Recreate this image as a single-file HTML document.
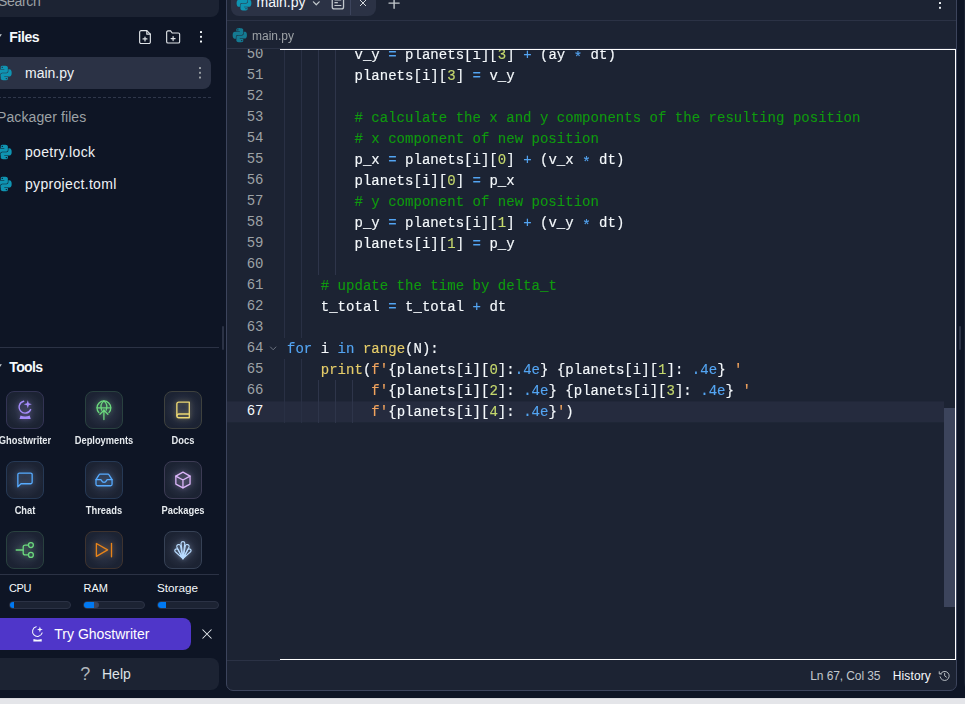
<!DOCTYPE html>
<html>
<head>
<meta charset="utf-8">
<title>main.py - Replit</title>
<style>
*{box-sizing:border-box;margin:0;padding:0}
html,body{width:965px;height:704px;overflow:hidden;background:#0e1525;}
body{position:relative;font-family:"Liberation Sans",sans-serif;color:#f5f9fc;font-size:14px;}
.abs{position:absolute}
.t{position:absolute;white-space:nowrap;line-height:1}
svg{position:absolute;overflow:visible}
/* ---------- sidebar ---------- */
#search{left:-10px;top:-16px;width:229px;height:33px;background:#1c2333;border-radius:8px}
.row{left:-10px;width:221px;height:32px;border-radius:8px}
.fname{font-size:14px;left:25px;color:#eef2f5}
.hdr{font-weight:bold;font-size:14px;left:9.3px;color:#f5f9fc;letter-spacing:-.4px}
.dim{color:#9da2a6}
.tool{width:38px;height:38px;border-radius:8px;background:#1c2333;border:1px solid #2b3245}
.tlabel{font-size:10.2px;font-weight:bold;color:#e6eaee;text-align:center;width:80px;transform:scaleX(.915);transform-origin:50% 50%}
.bar{height:8px;width:62px;top:601px;border-radius:4px;background:#1c2333;border:1px solid #2b3245;overflow:hidden}
.bar i{position:absolute;left:0;top:0;height:6px;background:#0079f2;display:block}
.rlabel{color:#f5f9fc;top:582.5px}
/* ---------- editor ---------- */
#pane{left:226px;top:-10px;width:731px;height:701px;background:#1c2333;border:1px solid #3c445c;border-radius:7px}
#code{left:227px;top:0;width:728px;height:660px;font-family:"Liberation Mono",monospace;font-size:14px;line-height:21px;white-space:pre;color:#f5f9fc;letter-spacing:0.03px}
.ln{position:absolute;left:227px;width:36.5px;text-align:right;color:#9da2a6;height:21px;font-family:"Liberation Mono",monospace;font-size:14px;line-height:21px;white-space:pre}
.ln.act{color:#f5f9fc}
.cl{position:absolute;left:286.6px;height:21px;font-family:"Liberation Mono",monospace;font-size:14px;line-height:21px;white-space:pre;color:#f5f9fc;letter-spacing:0.03px;will-change:transform;-webkit-text-stroke:0.15px}
.a{position:relative;top:2.5px}
.k{color:#54a5f3}.f{color:#e6cd69}.s{color:#f0a35e}.n{color:#c5d86d}.c{color:#109a10}
.g{position:absolute;width:1px;background:#293044}
.g2{position:absolute;width:1px;background:#2e354a}
</style>
</head>
<body>

<!-- ================= SIDEBAR ================= -->
<div id="search" class="abs"></div>
<div class="t dim" style="left:-2px;top:-5.8px;font-size:14px;letter-spacing:-.3px">Search</div>

<!-- Files header -->
<svg style="left:-6px;top:34px;transform:translate(0.9px,0.2px)" width="7" height="5.3" viewBox="0 0 7 5.3"><path fill="#c2c8cc" d="M0 0 H7 L3.5 5.3 Z"/></svg>
<div class="t hdr" style="top:30.25px">Files</div>
<!-- new file -->
<svg style="left:139px;top:30px" width="12" height="14.2" viewBox="0 0 12 14.2" fill="none" stroke="#e0e4e8" stroke-width="1.15" stroke-linejoin="round" stroke-linecap="round">
<path d="M7.8 0.65 H2.2 A1.5 1.5 0 0 0 0.65 2.2 V12 A1.5 1.5 0 0 0 2.2 13.55 H9.8 A1.5 1.5 0 0 0 11.35 12 V4.2 Z"/>
<path d="M7.8 0.65 V4.2 H11.35"/>
<path d="M6 7 V10.9 M4.05 8.95 H7.95" stroke-width="1.2"/>
</svg>
<!-- new folder -->
<svg style="left:166px;top:30px;transform:translate(0.0px,0.3px)" width="14.3" height="13.4" viewBox="0 0 14.3 13.4" fill="none" stroke="#e0e4e8" stroke-width="1.15" stroke-linejoin="round" stroke-linecap="round">
<path d="M0.65 2 A1.35 1.35 0 0 1 2 0.65 H4.6 L6.2 2.7 H12.3 A1.35 1.35 0 0 1 13.65 4.05 V11.4 A1.35 1.35 0 0 1 12.3 12.75 H2 A1.35 1.35 0 0 1 0.65 11.4 Z"/>
<path d="M7.1 6.3 V10.3 M5.1 8.3 H9.1" stroke-width="1.2"/>
</svg>
<!-- kebab -->
<div class="abs" style="left:200px;top:31.3px;width:2.2px;height:2.2px;background:#f5f9fc;border-radius:.5px;box-shadow:0 4.7px 0 #f5f9fc,0 9.4px 0 #f5f9fc"></div>

<!-- main.py row -->
<div class="abs row" style="top:57px;background:#2b3245"></div>
<svg style="left:-4px;top:65px;transform:translate(0.95px,0.65px)" width="14.7" height="14.7" viewBox="0 0 24 24"><path fill="#0f94b2" d="M14.25.18l.9.2.73.26.59.3.45.32.34.34.25.34.16.33.1.3.04.26.02.2-.01.13V8.5l-.05.63-.13.55-.21.46-.26.38-.3.31-.33.25-.35.19-.35.14-.33.1-.3.07-.26.04-.21.02H8.77l-.69.05-.59.14-.5.22-.41.27-.33.32-.27.35-.2.36-.15.37-.1.35-.07.32-.04.27-.02.21v3.06H3.17l-.21-.03-.28-.07-.32-.12-.35-.18-.36-.26-.36-.36-.35-.46-.32-.59-.28-.73-.21-.88-.14-1.05-.05-1.23.06-1.22.16-1.04.24-.87.32-.71.36-.57.4-.44.42-.33.42-.24.4-.16.36-.1.32-.05.24-.01h.16l.06.01h8.16v-.83H6.18l-.01-2.75-.02-.37.05-.34.11-.31.17-.28.25-.26.31-.23.38-.2.44-.18.51-.15.58-.12.64-.1.71-.06.77-.04.84-.02 1.27.05zm-6.3 1.98l-.23.33-.08.41.08.41.23.34.33.22.41.09.41-.09.33-.22.23-.34.08-.41-.08-.41-.23-.33-.33-.22-.41-.09-.41.09zm13.09 3.95l.28.06.32.12.35.18.36.27.36.35.35.47.32.59.28.73.21.88.14 1.04.05 1.23-.06 1.23-.16 1.04-.24.86-.32.71-.36.57-.4.45-.42.33-.42.24-.4.16-.36.09-.32.05-.24.02-.16-.01h-8.22v.82h5.84l.01 2.76.02.36-.05.34-.11.31-.17.29-.25.25-.31.24-.38.2-.44.17-.51.15-.58.13-.64.09-.71.07-.77.04-.84.01-1.27-.04-1.07-.14-.9-.2-.73-.25-.59-.3-.45-.33-.34-.34-.25-.34-.16-.33-.1-.3-.04-.25-.02-.2.01-.13v-5.34l.05-.64.13-.54.21-.46.26-.38.3-.32.33-.24.35-.2.35-.14.33-.1.3-.06.26-.04.21-.02.13-.01h5.84l.69-.05.59-.14.5-.21.41-.28.33-.32.27-.35.2-.36.15-.36.1-.35.07-.32.04-.28.02-.21V6.07h2.09l.14.01zm-6.47 14.25l-.23.33-.08.41.08.41.23.33.33.23.41.08.41-.08.33-.23.23-.33.08-.41-.08-.41-.23-.33-.33-.23-.41-.08-.41.08z"/></svg>
<div class="t fname" style="top:65.6px">main.py</div>
<div class="abs" style="left:199px;top:67.2px;width:2.2px;height:2.2px;background:#9da2a6;border-radius:.5px;box-shadow:0 4.7px 0 #9da2a6,0 9.4px 0 #9da2a6"></div>

<!-- dashed separator -->
<div class="abs" style="left:0;top:97px;width:211px;height:1px;background:repeating-linear-gradient(90deg,#2f374b 0 1px,transparent 1px 3px,#2f374b 3px 5px)"></div>

<div class="t dim" style="left:-3px;top:110px;font-size:14px;letter-spacing:.1px">Packager files</div>
<svg style="left:-4px;top:144px;transform:translate(0.95px,0.65px)" width="14.7" height="14.7" viewBox="0 0 24 24"><path fill="#0f94b2" d="M14.25.18l.9.2.73.26.59.3.45.32.34.34.25.34.16.33.1.3.04.26.02.2-.01.13V8.5l-.05.63-.13.55-.21.46-.26.38-.3.31-.33.25-.35.19-.35.14-.33.1-.3.07-.26.04-.21.02H8.77l-.69.05-.59.14-.5.22-.41.27-.33.32-.27.35-.2.36-.15.37-.1.35-.07.32-.04.27-.02.21v3.06H3.17l-.21-.03-.28-.07-.32-.12-.35-.18-.36-.26-.36-.36-.35-.46-.32-.59-.28-.73-.21-.88-.14-1.05-.05-1.23.06-1.22.16-1.04.24-.87.32-.71.36-.57.4-.44.42-.33.42-.24.4-.16.36-.1.32-.05.24-.01h.16l.06.01h8.16v-.83H6.18l-.01-2.75-.02-.37.05-.34.11-.31.17-.28.25-.26.31-.23.38-.2.44-.18.51-.15.58-.12.64-.1.71-.06.77-.04.84-.02 1.27.05zm-6.3 1.98l-.23.33-.08.41.08.41.23.34.33.22.41.09.41-.09.33-.22.23-.34.08-.41-.08-.41-.23-.33-.33-.22-.41-.09-.41.09zm13.09 3.95l.28.06.32.12.35.18.36.27.36.35.35.47.32.59.28.73.21.88.14 1.04.05 1.23-.06 1.23-.16 1.04-.24.86-.32.71-.36.57-.4.45-.42.33-.42.24-.4.16-.36.09-.32.05-.24.02-.16-.01h-8.22v.82h5.84l.01 2.76.02.36-.05.34-.11.31-.17.29-.25.25-.31.24-.38.2-.44.17-.51.15-.58.13-.64.09-.71.07-.77.04-.84.01-1.27-.04-1.07-.14-.9-.2-.73-.25-.59-.3-.45-.33-.34-.34-.25-.34-.16-.33-.1-.3-.04-.25-.02-.2.01-.13v-5.34l.05-.64.13-.54.21-.46.26-.38.3-.32.33-.24.35-.2.35-.14.33-.1.3-.06.26-.04.21-.02.13-.01h5.84l.69-.05.59-.14.5-.21.41-.28.33-.32.27-.35.2-.36.15-.36.1-.35.07-.32.04-.28.02-.21V6.07h2.09l.14.01zm-6.47 14.25l-.23.33-.08.41.08.41.23.33.33.23.41.08.41-.08.33-.23.23-.33.08-.41-.08-.41-.23-.33-.33-.23-.41-.08-.41.08z"/></svg>
<div class="t fname" style="top:144.6px;letter-spacing:.33px">poetry.lock</div>
<svg style="left:-4px;top:176px;transform:translate(0.95px,0.65px)" width="14.7" height="14.7" viewBox="0 0 24 24"><path fill="#0f94b2" d="M14.25.18l.9.2.73.26.59.3.45.32.34.34.25.34.16.33.1.3.04.26.02.2-.01.13V8.5l-.05.63-.13.55-.21.46-.26.38-.3.31-.33.25-.35.19-.35.14-.33.1-.3.07-.26.04-.21.02H8.77l-.69.05-.59.14-.5.22-.41.27-.33.32-.27.35-.2.36-.15.37-.1.35-.07.32-.04.27-.02.21v3.06H3.17l-.21-.03-.28-.07-.32-.12-.35-.18-.36-.26-.36-.36-.35-.46-.32-.59-.28-.73-.21-.88-.14-1.05-.05-1.23.06-1.22.16-1.04.24-.87.32-.71.36-.57.4-.44.42-.33.42-.24.4-.16.36-.1.32-.05.24-.01h.16l.06.01h8.16v-.83H6.18l-.01-2.75-.02-.37.05-.34.11-.31.17-.28.25-.26.31-.23.38-.2.44-.18.51-.15.58-.12.64-.1.71-.06.77-.04.84-.02 1.27.05zm-6.3 1.98l-.23.33-.08.41.08.41.23.34.33.22.41.09.41-.09.33-.22.23-.34.08-.41-.08-.41-.23-.33-.33-.22-.41-.09-.41.09zm13.09 3.95l.28.06.32.12.35.18.36.27.36.35.35.47.32.59.28.73.21.88.14 1.04.05 1.23-.06 1.23-.16 1.04-.24.86-.32.71-.36.57-.4.45-.42.33-.42.24-.4.16-.36.09-.32.05-.24.02-.16-.01h-8.22v.82h5.84l.01 2.76.02.36-.05.34-.11.31-.17.29-.25.25-.31.24-.38.2-.44.17-.51.15-.58.13-.64.09-.71.07-.77.04-.84.01-1.27-.04-1.07-.14-.9-.2-.73-.25-.59-.3-.45-.33-.34-.34-.25-.34-.16-.33-.1-.3-.04-.25-.02-.2.01-.13v-5.34l.05-.64.13-.54.21-.46.26-.38.3-.32.33-.24.35-.2.35-.14.33-.1.3-.06.26-.04.21-.02.13-.01h5.84l.69-.05.59-.14.5-.21.41-.28.33-.32.27-.35.2-.36.15-.36.1-.35.07-.32.04-.28.02-.21V6.07h2.09l.14.01zm-6.47 14.25l-.23.33-.08.41.08.41.23.33.33.23.41.08.41-.08.33-.23.23-.33.08-.41-.08-.41-.23-.33-.33-.23-.41-.08-.41.08z"/></svg>
<div class="t fname" style="top:176.6px;letter-spacing:.32px">pyproject.toml</div>

<!-- resize handle -->
<div class="abs" style="left:222px;top:326px;width:2px;height:24px;background:#2b3245;border-radius:1px"></div>

<!-- Tools -->
<div class="abs" style="left:0;top:347px;width:219px;height:1px;background:#2b3245"></div>
<svg style="left:-6px;top:364px;transform:translate(0.9px,0.2px)" width="7" height="5.3" viewBox="0 0 7 5.3"><path fill="#c2c8cc" d="M0 0 H7 L3.5 5.3 Z"/></svg>
<div class="t hdr" style="top:359.7px;letter-spacing:-.62px">Tools</div>
<div class="abs tool" style="left:6px;top:391px;border-color:#333454;background:radial-gradient(circle at 50% 50%, #343a4c 0%, #272e40 38%, #1c2333 72%)"></div><svg style="left:6px;top:391px;filter:drop-shadow(0 0 2.5px #a58cfa70)" width="38" height="38" viewBox="0 0 38 38" fill="none" stroke-linecap="round" stroke-linejoin="round"><g stroke="#a58cfa" stroke-width="1.4"><path d="M17.6 10.3 A6 6 0 1 0 24.6 18.6"/></g><path fill="#a58cfa" d="M21.8 9.2 L22.75 12.25 L25.8 13.2 L22.75 14.15 L21.8 17.2 L20.85 14.15 L17.8 13.2 L20.85 12.25 Z"/><path fill="#a58cfa" d="M14.5 24.5 Q19.1 26.6 23.7 24.5 L24.7 27.9 L13.5 27.9 Z"/></svg>
<div class="t tlabel" style="left:-15px;top:436.3px">Ghostwriter</div>
<div class="abs tool" style="left:85px;top:391px;border-color:#29413f;background:radial-gradient(circle at 50% 50%, #343a4c 0%, #272e40 38%, #1c2333 72%)"></div><svg style="left:85px;top:391px;filter:drop-shadow(0 0 2.5px #6cd97e70)" width="38" height="38" viewBox="0 0 38 38" fill="none" stroke-linecap="round" stroke-linejoin="round"><g stroke="#6cd97e" stroke-width="1.3"><path d="M13.9 21.6 A6.9 6.9 0 1 1 23.9 21.6"/><path d="M12.1 16.8 H25.7"/><path d="M16.6 19.2 C15.3 15.4 16.3 11.9 18.9 10 C21.5 11.9 22.5 15.4 21.2 19.2"/><path d="M18.9 28.5 V19"/><path d="M14.9 23.2 L18.9 19.2 L22.9 23.2"/></g></svg>
<div class="t tlabel" style="left:64px;top:436.3px">Deployments</div>
<div class="abs tool" style="left:164px;top:391px;border-color:#3e413e;background:radial-gradient(circle at 50% 50%, #343a4c 0%, #272e40 38%, #1c2333 72%)"></div><svg style="left:164px;top:391px;filter:drop-shadow(0 0 2.5px #ecd87470)" width="38" height="38" viewBox="0 0 38 38" fill="none" stroke-linecap="round" stroke-linejoin="round"><g stroke="#ecd874" stroke-width="1.35"><path d="M25.3 11.05 H14.85 A2 2 0 0 0 12.85 13.05 V24.75 A2 2 0 0 0 14.85 26.75 H25.3 Z"/><path d="M12.95 24.6 A2 2 0 0 1 14.85 23 H25.3"/></g></svg>
<div class="t tlabel" style="left:143px;top:436.3px">Docs</div>
<div class="abs tool" style="left:6px;top:461px;border-color:#263955;background:radial-gradient(circle at 50% 50%, #343a4c 0%, #272e40 38%, #1c2333 72%)"></div><svg style="left:6px;top:461px;filter:drop-shadow(0 0 2.5px #57abff70)" width="38" height="38" viewBox="0 0 38 38" fill="none" stroke-linecap="round" stroke-linejoin="round"><g stroke="#57abff" stroke-width="1.3"><path d="M11.85 25.7 V13.6 A1.5 1.5 0 0 1 13.35 12.1 H24.65 A1.5 1.5 0 0 1 26.15 13.6 V21.25 A1.5 1.5 0 0 1 24.65 22.75 H15 Z"/></g></svg>
<div class="t tlabel" style="left:-15px;top:506.3px">Chat</div>
<div class="abs tool" style="left:85px;top:461px;border-color:#263955;background:radial-gradient(circle at 50% 50%, #343a4c 0%, #272e40 38%, #1c2333 72%)"></div><svg style="left:85px;top:461px;filter:drop-shadow(0 0 2.5px #57abff70)" width="38" height="38" viewBox="0 0 38 38" fill="none" stroke-linecap="round" stroke-linejoin="round"><g stroke="#57abff" stroke-width="1.3"><path d="M11 18.6 L14 13.8 A1.3 1.3 0 0 1 15.1 13.15 H22.95 A1.3 1.3 0 0 1 24.05 13.8 L27.05 18.6 V23.25 A1.5 1.5 0 0 1 25.55 24.75 H12.5 A1.5 1.5 0 0 1 11 23.25 Z"/><path d="M11 18.6 H15.8 C16.5 18.6 16.5 21.3 19.03 21.3 C21.55 21.3 21.55 18.6 22.25 18.6 H27.05"/></g></svg>
<div class="t tlabel" style="left:64px;top:506.3px">Threads</div>
<div class="abs tool" style="left:164px;top:461px;border-color:#3c3b54;background:radial-gradient(circle at 50% 50%, #343a4c 0%, #272e40 38%, #1c2333 72%)"></div><svg style="left:164px;top:461px;filter:drop-shadow(0 0 2.5px #dcb6fa70)" width="38" height="38" viewBox="0 0 38 38" fill="none" stroke-linecap="round" stroke-linejoin="round"><g stroke="#dcb6fa" stroke-width="1.3"><path d="M18.95 11.1 L26.05 15.1 V23.1 L18.95 26.8 L11.85 23.1 V15.1 Z"/><path d="M11.85 15.1 L18.95 19 L26.05 15.1 M18.95 19 V26.8"/></g></svg>
<div class="t tlabel" style="left:143px;top:506.3px">Packages</div>
<div class="abs tool" style="left:6px;top:531px;border-color:#29413f;background:radial-gradient(circle at 50% 50%, #343a4c 0%, #272e40 38%, #1c2333 72%)"></div><svg style="left:6px;top:531px;filter:drop-shadow(0 0 2.5px #6cd97e70)" width="38" height="38" viewBox="0 0 38 38" fill="none" stroke-linecap="round" stroke-linejoin="round"><g stroke="#6cd97e" stroke-width="1.3"><path d="M10.2 19 H17.2"/><path d="M22.4 14.1 H19.2 A2 2 0 0 0 17.2 16.1 V21.9 A2 2 0 0 0 19.2 23.9 H22.4"/><circle cx="24.9" cy="14.1" r="2.45"/><circle cx="24.9" cy="23.9" r="2.45"/></g></svg>
<div class="abs tool" style="left:85px;top:531px;border-color:#3e332f;background:radial-gradient(circle at 50% 50%, #343a4c 0%, #272e40 38%, #1c2333 72%)"></div><svg style="left:85px;top:531px;filter:drop-shadow(0 0 2.5px #e8841a70)" width="38" height="38" viewBox="0 0 38 38" fill="none" stroke-linecap="round" stroke-linejoin="round"><g stroke="#e8841a" stroke-width="1.35"><path d="M11.4 12.5 V25.3 L22.6 18.9 Z"/><path d="M26.5 12.4 V25.7"/></g></svg>
<div class="abs tool" style="left:164px;top:531px;border-color:#364155;background:radial-gradient(circle at 50% 50%, #343a4c 0%, #272e40 38%, #1c2333 72%)"></div><svg style="left:164px;top:531px;filter:drop-shadow(0 0 2.5px #b8dbff70)" width="38" height="38" viewBox="0 0 38 38" fill="none" stroke-linecap="round" stroke-linejoin="round"><g stroke="#b8dbff" stroke-width="1.15" fill="none" stroke-linejoin="round"><path d="M18.93 27.7 L11.07 20.49 A1.78 1.78 0 0 1 13.84 18.33 Z"/><path d="M18.93 27.7 L24.02 18.33 A1.78 1.78 0 0 1 26.79 20.49 Z"/><path d="M18.93 27.7 L12.80 15.93 A1.98 1.98 0 0 1 16.51 14.65 Z"/><path d="M18.93 27.7 L21.35 14.65 A1.98 1.98 0 0 1 25.06 15.93 Z"/><path d="M18.93 27.7 L17.04 12.33 A1.90 1.90 0 0 1 20.82 12.33 Z"/></g><path fill="#b8dbff" d="M18.93 28.1 L15.4 24.4 Q18.93 22.8 22.46 24.4 Z"/></svg>

<!-- resources -->
<div class="abs" style="left:0;top:574px;width:219px;height:1px;background:#2b3245"></div>
<div class="t rlabel" style="left:9px;font-size:11px;letter-spacing:-.35px">CPU</div>
<div class="t rlabel" style="left:83.5px;font-size:11px">RAM</div>
<div class="t rlabel" style="left:157px;top:581.5px;font-size:11.7px">Storage</div>
<div class="abs bar" style="left:9px"><i style="width:4px"></i></div>
<div class="abs bar" style="left:82.5px"><i style="width:15px;background:#3c445c;border-radius:0 3px 3px 0"></i><i style="width:10px"></i></div>
<div class="abs bar" style="left:157px"><i style="width:8px"></i></div>

<!-- Try Ghostwriter -->
<div class="abs" style="left:-10px;top:618px;width:201px;height:32px;border-radius:8px;background:#4f36c9"></div>
<svg style="left:31px;top:626px" width="12" height="16" viewBox="0 0 12 16" fill="none" stroke-linecap="round">
<path d="M5.2 0.75 A4.9 4.9 0 1 0 11.15 6.9" stroke="#f5f9fc" stroke-width="1.05"/>
<path fill="#f5f9fc" d="M8.9 0.6 L9.6 2.8 L11.8 3.5 L9.6 4.2 L8.9 6.4 L8.2 4.2 L6 3.5 L8.2 2.8 Z"/>
<path fill="#f5f9fc" d="M2.5 13.1 Q6.55 14.5 10.6 13.1 L10.8 15.6 H2.3 Z"/>
</svg>
<div class="t" style="left:54.3px;top:627.1px;font-size:14px;color:#fff">Try Ghostwriter</div>
<svg style="left:202px;top:629px" width="10" height="10" viewBox="0 0 10 10" stroke="#e8ecef" stroke-width="1.05" stroke-linecap="butt"><path d="M0.5 0.5 L9.5 9.5 M9.5 0.5 L0.5 9.5"/></svg>

<!-- Help -->
<div class="abs" style="left:-10px;top:658px;width:229px;height:32px;border-radius:8px;background:#1c2333"></div>
<div class="t" style="left:80.3px;top:665.3px;font-size:18px;color:#b0b6bb">?</div>
<div class="t" style="left:102px;top:667.2px;font-size:14px;color:#dfe3e7">Help</div>

<!-- ================= EDITOR ================= -->
<div id="pane" class="abs"></div>

<!-- tab -->
<div class="abs" style="left:231px;top:-12px;width:145px;height:28px;border-radius:8px;background:#2b3245"></div>
<svg style="left:236px;top:-5px;transform:translate(0.65px,0.85px)" width="14.7" height="14.7" viewBox="0 0 24 24"><path fill="#0f94b2" d="M14.25.18l.9.2.73.26.59.3.45.32.34.34.25.34.16.33.1.3.04.26.02.2-.01.13V8.5l-.05.63-.13.55-.21.46-.26.38-.3.31-.33.25-.35.19-.35.14-.33.1-.3.07-.26.04-.21.02H8.77l-.69.05-.59.14-.5.22-.41.27-.33.32-.27.35-.2.36-.15.37-.1.35-.07.32-.04.27-.02.21v3.06H3.17l-.21-.03-.28-.07-.32-.12-.35-.18-.36-.26-.36-.36-.35-.46-.32-.59-.28-.73-.21-.88-.14-1.05-.05-1.23.06-1.22.16-1.04.24-.87.32-.71.36-.57.4-.44.42-.33.42-.24.4-.16.36-.1.32-.05.24-.01h.16l.06.01h8.16v-.83H6.18l-.01-2.75-.02-.37.05-.34.11-.31.17-.28.25-.26.31-.23.38-.2.44-.18.51-.15.58-.12.64-.1.71-.06.77-.04.84-.02 1.27.05zm-6.3 1.98l-.23.33-.08.41.08.41.23.34.33.22.41.09.41-.09.33-.22.23-.34.08-.41-.08-.41-.23-.33-.33-.22-.41-.09-.41.09zm13.09 3.95l.28.06.32.12.35.18.36.27.36.35.35.47.32.59.28.73.21.88.14 1.04.05 1.23-.06 1.23-.16 1.04-.24.86-.32.71-.36.57-.4.45-.42.33-.42.24-.4.16-.36.09-.32.05-.24.02-.16-.01h-8.22v.82h5.84l.01 2.76.02.36-.05.34-.11.31-.17.29-.25.25-.31.24-.38.2-.44.17-.51.15-.58.13-.64.09-.71.07-.77.04-.84.01-1.27-.04-1.07-.14-.9-.2-.73-.25-.59-.3-.45-.33-.34-.34-.25-.34-.16-.33-.1-.3-.04-.25-.02-.2.01-.13v-5.34l.05-.64.13-.54.21-.46.26-.38.3-.32.33-.24.35-.2.35-.14.33-.1.3-.06.26-.04.21-.02.13-.01h5.84l.69-.05.59-.14.5-.21.41-.28.33-.32.27-.35.2-.36.15-.36.1-.35.07-.32.04-.28.02-.21V6.07h2.09l.14.01zm-6.47 14.25l-.23.33-.08.41.08.41.23.33.33.23.41.08.41-.08.33-.23.23-.33.08-.41-.08-.41-.23-.33-.33-.23-.41-.08-.41.08z"/></svg>
<div class="t" style="left:256.5px;top:-5.3px;font-size:14px;color:#f5f9fc">main.py</div>
<svg style="left:312px;top:1px;transform:translate(0.8px,0.2px)" width="7" height="4.2" viewBox="0 0 7 4.2" fill="none" stroke="#c2c8cc" stroke-width="1.2" stroke-linecap="round" stroke-linejoin="round"><path d="M0.6 0.6 L3.5 3.6 L6.4 0.6"/></svg>
<svg style="left:331px;top:-5px;transform:translate(0.6px,0.4px)" width="12.6" height="14.2" viewBox="0 0 12.6 14.2" fill="none" stroke="#c2c8cc" stroke-width="1.3" stroke-linecap="round"><rect x="0.65" y="0.65" width="11.3" height="12.9" rx="2"/><path d="M3.3 4.4 H9.3 M3.3 7.3 H5.8 M3.3 10.1 H9.3" stroke-width="1.2"/></svg>
<div class="abs" style="left:350px;top:-12px;width:1px;height:27px;background:#3c445c"></div>
<svg style="left:360px;top:0px" width="6" height="6" viewBox="0 0 6 6" stroke="#d5dade" stroke-width="1" stroke-linecap="butt"><path d="M0 0 L6 6 M6 0 L0 6"/></svg>
<svg style="left:388px;top:-3px;transform:translate(0.4px,0.4px)" width="11.4" height="11.4" viewBox="0 0 11.4 11.4" stroke="#c2c8cc" stroke-width="1.4" stroke-linecap="round"><path d="M5.7 0.6 V10.8 M0.6 5.7 H10.8"/></svg>
<!-- top-right kebab -->
<div class="abs" style="left:939px;top:-2.9px;width:2.2px;height:2.2px;background:#f5f9fc;border-radius:.5px;box-shadow:0 4.9px 0 #f5f9fc,0 9.8px 0 #f5f9fc"></div>
<div class="abs" style="left:227px;top:20px;width:729px;height:1px;background:#2b3245"></div>

<!-- code -->
<div class="abs" style="left:227px;top:401px;width:717px;height:21px;background:#252b3e;transform:translateY(.4px)"></div>
<div class="g" style="left:284px;top:48px;height:290px"></div>
<div class="g" style="left:301px;top:48px;height:290px"></div>
<div class="g2" style="left:318px;top:48px;height:227px"></div>
<div class="g2" style="left:335px;top:48px;height:227px"></div>
<div class="g" style="left:284px;top:359px;height:64px"></div>
<div class="g" style="left:301px;top:359px;height:64px"></div>
<div class="g2" style="left:318px;top:380px;height:43px"></div>
<div class="g2" style="left:335px;top:380px;height:43px"></div>
<div class="g2" style="left:352px;top:380px;height:43px"></div>
<div class="ln" style="top:44px">50</div>
<div class="cl" style="top:45px">        v_y <span class="k">=</span> planets[i][<span class="n">3</span>] <span class="k">+</span> (ay <span class="k"><span class="a">*</span></span> dt)</div>
<div class="ln" style="top:65px">51</div>
<div class="cl" style="top:66px">        planets[i][<span class="n">3</span>] <span class="k">=</span> v_y</div>
<div class="ln" style="top:86px">52</div>
<div class="ln" style="top:107px">53</div>
<div class="cl" style="top:108px">        <span class="c"># calculate the x and y components of the resulting position</span></div>
<div class="ln" style="top:128px">54</div>
<div class="cl" style="top:129px">        <span class="c"># x component of new position</span></div>
<div class="ln" style="top:149px">55</div>
<div class="cl" style="top:150px">        p_x <span class="k">=</span> planets[i][<span class="n">0</span>] <span class="k">+</span> (v_x <span class="k"><span class="a">*</span></span> dt)</div>
<div class="ln" style="top:170px">56</div>
<div class="cl" style="top:171px">        planets[i][<span class="n">0</span>] <span class="k">=</span> p_x</div>
<div class="ln" style="top:191px">57</div>
<div class="cl" style="top:192px">        <span class="c"># y component of new position</span></div>
<div class="ln" style="top:212px">58</div>
<div class="cl" style="top:213px">        p_y <span class="k">=</span> planets[i][<span class="n">1</span>] <span class="k">+</span> (v_y <span class="k"><span class="a">*</span></span> dt)</div>
<div class="ln" style="top:233px">59</div>
<div class="cl" style="top:234px">        planets[i][<span class="n">1</span>] <span class="k">=</span> p_y</div>
<div class="ln" style="top:254px">60</div>
<div class="ln" style="top:275px">61</div>
<div class="cl" style="top:276px">    <span class="c"># update the time by delta_t</span></div>
<div class="ln" style="top:296px">62</div>
<div class="cl" style="top:297px">    t_total <span class="k">=</span> t_total <span class="k">+</span> dt</div>
<div class="ln" style="top:317px">63</div>
<div class="ln" style="top:338px">64</div>
<div class="cl" style="top:339px"><span class="k">for</span> i <span class="k">in</span> <span class="f">range</span>(N):</div>
<div class="ln" style="top:359px">65</div>
<div class="cl" style="top:360px">    <span class="f">print</span>(<span class="s">f'</span>{planets[i][<span class="n">0</span>]:<span class="k">.4e</span>}<span class="s"> </span>{planets[i][<span class="n">1</span>]:<span class="k"> .4e</span>}<span class="s"> '</span></div>
<div class="ln" style="top:380px">66</div>
<div class="cl" style="top:381px">          <span class="s">f'</span>{planets[i][<span class="n">2</span>]:<span class="k"> .4e</span>}<span class="s"> </span>{planets[i][<span class="n">3</span>]:<span class="k"> .4e</span>}<span class="s"> '</span></div>
<div class="ln act" style="top:401px">67</div>
<div class="cl" style="top:402px">          <span class="s">f'</span>{planets[i][<span class="n">4</span>]:<span class="k"> .4e</span>}<span class="s">'</span>)</div>

<!-- breadcrumb (covers top of line 50) -->
<div class="abs" style="left:227px;top:21px;width:729px;height:28px;background:#1c2333;border-bottom:1px solid #2b3245"></div>
<svg style="left:232px;top:28px;transform:translate(0.7px,0.1px)" width="14.2" height="14.2" viewBox="0 0 24 24"><path fill="#147a92" d="M14.25.18l.9.2.73.26.59.3.45.32.34.34.25.34.16.33.1.3.04.26.02.2-.01.13V8.5l-.05.63-.13.55-.21.46-.26.38-.3.31-.33.25-.35.19-.35.14-.33.1-.3.07-.26.04-.21.02H8.77l-.69.05-.59.14-.5.22-.41.27-.33.32-.27.35-.2.36-.15.37-.1.35-.07.32-.04.27-.02.21v3.06H3.17l-.21-.03-.28-.07-.32-.12-.35-.18-.36-.26-.36-.36-.35-.46-.32-.59-.28-.73-.21-.88-.14-1.05-.05-1.23.06-1.22.16-1.04.24-.87.32-.71.36-.57.4-.44.42-.33.42-.24.4-.16.36-.1.32-.05.24-.01h.16l.06.01h8.16v-.83H6.18l-.01-2.75-.02-.37.05-.34.11-.31.17-.28.25-.26.31-.23.38-.2.44-.18.51-.15.58-.12.64-.1.71-.06.77-.04.84-.02 1.27.05zm-6.3 1.98l-.23.33-.08.41.08.41.23.34.33.22.41.09.41-.09.33-.22.23-.34.08-.41-.08-.41-.23-.33-.33-.22-.41-.09-.41.09zm13.09 3.95l.28.06.32.12.35.18.36.27.36.35.35.47.32.59.28.73.21.88.14 1.04.05 1.23-.06 1.23-.16 1.04-.24.86-.32.71-.36.57-.4.45-.42.33-.42.24-.4.16-.36.09-.32.05-.24.02-.16-.01h-8.22v.82h5.84l.01 2.76.02.36-.05.34-.11.31-.17.29-.25.25-.31.24-.38.2-.44.17-.51.15-.58.13-.64.09-.71.07-.77.04-.84.01-1.27-.04-1.07-.14-.9-.2-.73-.25-.59-.3-.45-.33-.34-.34-.25-.34-.16-.33-.1-.3-.04-.25-.02-.2.01-.13v-5.34l.05-.64.13-.54.21-.46.26-.38.3-.32.33-.24.35-.2.35-.14.33-.1.3-.06.26-.04.21-.02.13-.01h5.84l.69-.05.59-.14.5-.21.41-.28.33-.32.27-.35.2-.36.15-.36.1-.35.07-.32.04-.28.02-.21V6.07h2.09l.14.01zm-6.47 14.25l-.23.33-.08.41.08.41.23.33.33.23.41.08.41-.08.33-.23.23-.33.08-.41-.08-.41-.23-.33-.33-.23-.41-.08-.41.08z"/></svg>
<div class="t" style="left:252.3px;top:29.5px;font-size:12px;color:#9da2a6;will-change:transform">main.py</div>

<!-- fold chevron -->
<svg style="left:270px;top:346px;transform:translate(0.0px,0.5px)" width="6.4" height="4" viewBox="0 0 6.4 4" fill="none" stroke="#6b7280" stroke-width="1" stroke-linecap="round" stroke-linejoin="round"><path d="M0.5 0.5 L3.2 3.3 L5.9 0.5"/></svg>

<!-- white focus outline -->
<div class="abs" style="left:280px;top:49px;width:676px;height:1px;background:#fff"></div>
<div class="abs" style="left:955px;top:49px;width:1px;height:611px;background:#fff"></div>
<div class="abs" style="left:280px;top:659px;width:676px;height:1px;background:#fff"></div>
<!-- scrollbar thumb -->
<div class="abs" style="left:944px;top:408px;width:11px;height:199px;background:#3c445c"></div>

<!-- status bar -->
<div class="abs" style="left:227px;top:660px;width:53px;height:1px;background:#2b3245"></div>
<div class="t" style="left:810.3px;top:670px;font-size:12px;color:#c2c8cc;letter-spacing:-.1px">Ln 67, Col 35</div>
<div class="t" style="left:892.8px;top:670px;font-size:12px;color:#f5f9fc;letter-spacing:.12px">History</div>
<svg style="left:938px;top:670px;transform:translate(0.6px,0.6px)" width="11.2" height="10.3" viewBox="0 0 12 11" fill="none" stroke="#c2c8cc" stroke-width="1.0" stroke-linecap="round" stroke-linejoin="round">
<path d="M2.2 3.2 A4.9 4.9 0 1 1 1.6 6.6"/><path d="M0.7 1.2 V3.6 H3.1"/><path d="M6.5 2.9 V5.6 L8.4 7"/>
</svg>

<!-- right pane sliver + handle -->
<div class="abs" style="left:959px;top:326px;width:2px;height:24px;background:#2b3245;border-radius:1px"></div>
<div class="abs" style="left:964px;top:-10px;width:20px;height:701px;background:#1c2333;border-radius:8px"></div>

<!-- bottom strip -->
<div class="abs" style="left:0;top:698px;width:965px;height:6px;background:#e4e5e9;border-top:1px solid #d9dade"></div>
</body>
</html>
